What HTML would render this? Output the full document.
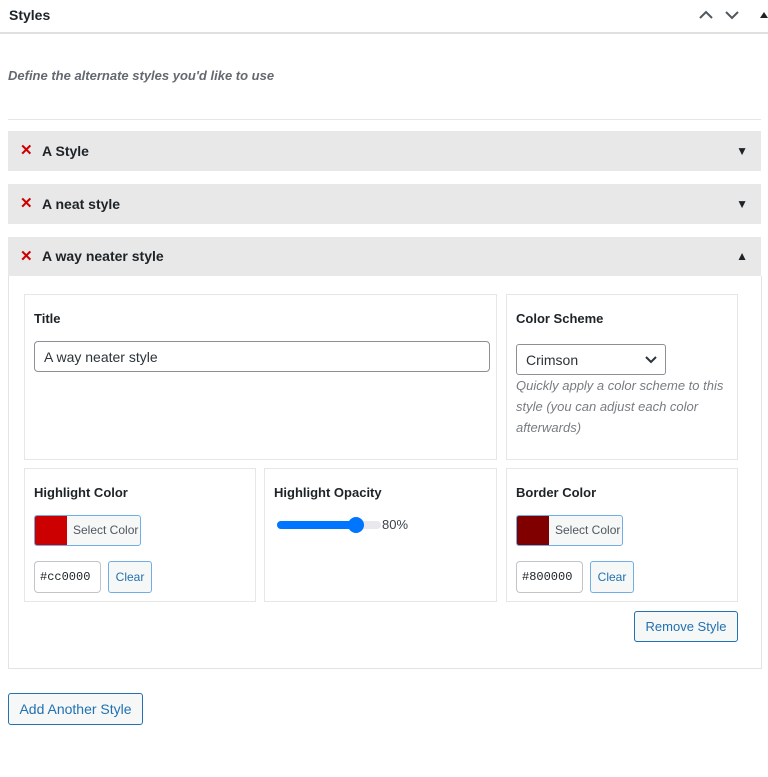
<!DOCTYPE html>
<html><head><style>
*{box-sizing:border-box;margin:0;padding:0}
body{width:768px;height:777px;background:#fff;font-family:"Liberation Sans",sans-serif;color:#1d2327;font-size:13px;position:relative;overflow:hidden}
.a{position:absolute}
.bar{position:absolute;left:8px;width:753px;background:#e8e8e8;font-weight:bold;font-size:14px}
.bar .x{position:absolute;left:12px;color:#c00;font-size:15px;font-weight:bold}
.bar .t{position:absolute;left:34px}
.bar .tri{position:absolute;right:13px;font-size:12px}
.box{position:absolute;border:1px solid #e6e6e6;background:#fff}
.lbl{position:absolute;left:9px;top:16px;font-weight:bold;font-size:13px}
.btn{position:absolute;border:1px solid #2271b1;border-radius:3px;background:#f6f7f7;color:#2271b1;font-size:13px;text-align:center}
.inp{position:absolute;border:1px solid #8c8f94;border-radius:4px;background:#fff}
</style></head><body>
<div class="a" style="left:9px;top:7px;font-weight:bold;font-size:14px">Styles</div>
<svg class="a" style="left:698px;top:8px" width="70" height="14"><path d="M2 10 L8 4 L14 10" stroke="#50575e" stroke-width="2" fill="none"/><path d="M28 4 L34 10 L40 4" stroke="#50575e" stroke-width="2" fill="none"/><path d="M62 10 L66 4 L70 10 Z" fill="#1d2327"/></svg>
<div class="a" style="left:0;top:32px;width:768px;height:2px;background:#e0e0e0"></div>
<div class="a" style="left:8px;top:68px;font-style:italic;font-weight:bold;color:#646970;font-size:13px">Define the alternate styles you'd like to use</div>
<div class="a" style="left:8px;top:119px;width:753px;height:1px;background:#e6e6e6"></div>

<div class="bar" style="top:131px;height:40px;line-height:40px"><span class="x">✕</span><span class="t">A Style</span><span class="tri">▼</span></div>
<div class="bar" style="top:184px;height:40px;line-height:40px"><span class="x">✕</span><span class="t">A neat style</span><span class="tri">▼</span></div>
<div class="bar" style="top:237px;height:39px;line-height:39px"><span class="x">✕</span><span class="t">A way neater style</span><span class="tri">▲</span></div>
<div class="a" style="left:8px;top:276px;width:754px;height:393px;border:1px solid #e3e3e3;border-top:none"></div>

<div class="box" style="left:24px;top:294px;width:473px;height:166px">
<div class="lbl">Title</div>
<div class="inp" style="left:9px;top:46px;width:456px;height:31px;padding:7px 9px;font-size:14px;color:#2c3338">A way neater style</div>
</div>
<div class="box" style="left:506px;top:294px;width:232px;height:166px">
<div class="lbl">Color Scheme</div>
<div class="inp" style="left:9px;top:49px;width:150px;height:31px;padding:7px 9px;font-size:14px;color:#2c3338;border-radius:3px">Crimson
<svg style="position:absolute;right:8px;top:10px" width="12" height="10"><path d="M1 2 L6 7 L11 2" stroke="#2c3338" stroke-width="2" fill="none"/></svg></div>
<div class="a" style="left:9px;top:80px;width:220px;font-style:italic;color:#787c82;font-size:13px;line-height:21px">Quickly apply a color scheme to this style (you can adjust each color afterwards)</div>
</div>

<div class="box" style="left:24px;top:468px;width:232px;height:134px">
<div class="lbl">Highlight Color</div>
<div class="btn" style="left:9px;top:46px;width:107px;height:31px;overflow:hidden;font-size:12px;color:#50575e;border-color:#72aee6"><div style="position:absolute;left:0;top:0;width:32px;height:100%;background:#c00"></div><span style="position:absolute;left:38px;top:7px">Select Color</span></div>
<div class="inp" style="left:9px;top:92px;width:67px;height:32px;font-family:'Liberation Mono',monospace;font-size:12px;padding:8px 5px;border-color:#c3c4c7">#cc0000</div>
<div class="btn" style="left:83px;top:92px;width:44px;height:32px;line-height:30px;font-size:12px;border-color:#72aee6">Clear</div>
</div>
<div class="box" style="left:264px;top:468px;width:233px;height:134px">
<div class="lbl">Highlight Opacity</div>
<div class="a" style="left:12px;top:52px;width:104px;height:8px;border-radius:4px;background:#e9e9ed"></div>
<div class="a" style="left:12px;top:52px;width:80px;height:8px;border-radius:4px;background:#0075ff"></div>
<div class="a" style="left:83px;top:48px;width:16px;height:16px;border-radius:50%;background:#0075ff"></div>
<div class="a" style="left:117px;top:48px;font-size:13px;color:#3c434a">80%</div>
</div>
<div class="box" style="left:506px;top:468px;width:232px;height:134px">
<div class="lbl">Border Color</div>
<div class="btn" style="left:9px;top:46px;width:107px;height:31px;overflow:hidden;font-size:12px;color:#50575e;border-color:#72aee6"><div style="position:absolute;left:0;top:0;width:32px;height:100%;background:#800000"></div><span style="position:absolute;left:38px;top:7px">Select Color</span></div>
<div class="inp" style="left:9px;top:92px;width:67px;height:32px;font-family:'Liberation Mono',monospace;font-size:12px;padding:8px 5px;border-color:#c3c4c7">#800000</div>
<div class="btn" style="left:83px;top:92px;width:44px;height:32px;line-height:30px;font-size:12px;border-color:#72aee6">Clear</div>
</div>

<div class="btn" style="left:634px;top:611px;width:104px;height:31px;line-height:29px">Remove Style</div>
<div class="btn" style="left:8px;top:693px;width:135px;height:32px;line-height:30px;font-size:14px">Add Another Style</div>
</body></html>
